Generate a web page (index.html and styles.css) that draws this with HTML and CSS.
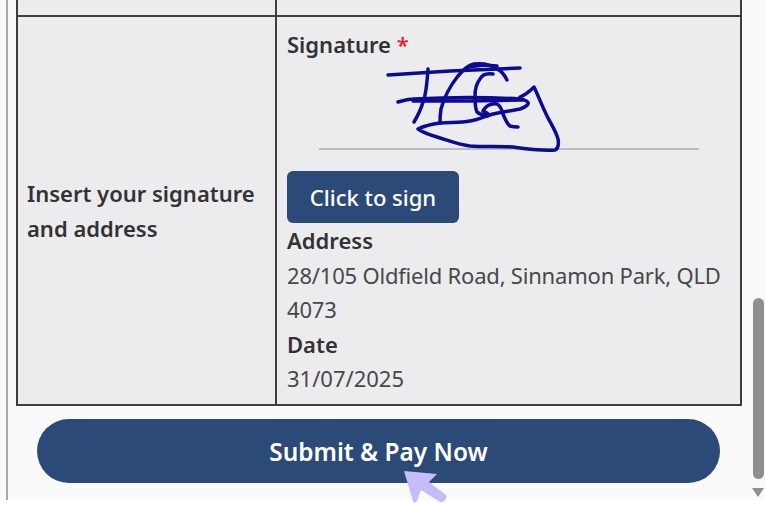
FILE: index.html
```html
<!DOCTYPE html>
<html lang="en">
<head>
<meta charset="utf-8">
<title>Signature</title>
<link rel="stylesheet" href="styles.css">
</head>
<body>
<div class="page">
  <main class="content">
    <table class="form-table">
      <tr class="row-prev"><td class="label"></td><td class="field"></td></tr>
      <tr>
        <td class="label"><strong>Insert your signature and address</strong></td>
        <td class="field">
          <div class="line title"><strong>Signature</strong> <span class="req">*</span></div>
          <div class="sig-pad">
            <svg class="sig" viewBox="319 60 380 95" fill="none" stroke="#0b0b96" stroke-width="3.5" stroke-linecap="round" stroke-linejoin="round" aria-hidden="true">
              <path d="M388 76L450 72L520 69"/>
              <path d="M468 68L484 66L497 67"/>
              <path d="M428 70C427 85 426 96 423 103C421 110 417 118 414 123"/>
              <path d="M507 81C504 75 500 71 497 70C490 65 482 64 474 65C468 66 464 70 458 77C450 87 444 99 441 110C440 116 440 120 440 124"/>
              <path d="M398 103C405 101 409 100 413 100C450 98 490 98 520 100C526 101 529 103 528 105C526 108 523 109 520 110C510 112 502 113 493 115C485 117 478 121 470 122C460 124 450 123 440 124C432 125 424 127 418 130C424 134 430 136 437 138C450 142 460 146 470 147C485 148 500 147 513 148C527 150 541 152 555 151C558 150 559 145 558 140C556 132 551 125 547 117C542 107 538 96 534 88C530 92 525 96 520 98"/>
              <path d="M413 102L470 102L522 101"/>
              <path d="M493 75C487 74 482 76 480 80C476 85 475 90 475 97C475 103 475 109 477 113C480 116 484 116 487 117C491 116 487 114 483 112C486 107 491 104 497 105C501 107 502 111 503 115C505 120 507 125 510 127C513 128 516 128 518 128"/>
            </svg>
          </div>
          <button class="btn-sign" type="button">Click to sign</button>
          <div class="line"><strong>Address</strong></div>
          <div class="line addr">28/105 Oldfield Road, Sinnamon Park, QLD 4073</div>
          <div class="line"><strong>Date</strong></div>
          <div class="line">31/07/2025</div>
        </td>
      </tr>
    </table>
    <button class="btn-submit" type="button">Submit &amp; Pay Now</button>
    <svg class="cursor" viewBox="0 0 50 36" aria-hidden="true"><path d="M3 2L36 5L28 13L45 26C47 29 43 34 39 33L20 21L16 32C15 34 13 34 12 32Z" fill="#c5bcfb"/></svg>
  </main>
  <aside class="scrollbar">
    <div class="thumb"></div>
    <div class="arrow"></div>
  </aside>
</div>
<div class="below"></div>
</body>
</html>
```
FILE: styles.css
```css
html, body { margin: 0; padding: 0; background: #fff; }
body { height: 530px; overflow: hidden; font-family: "Noto Sans", "Open Sans", sans-serif; color: #484848; }
.page { display: flex; height: 500px; background: #fafafa; padding-left: 6px; position: relative; }
.content { flex: 1; border-left: 2px solid #a9a9a9; padding-left: 8px; min-width: 0; }
.form-table { width: 726px; border-collapse: collapse; table-layout: fixed; background: #ececee; font-size: 22px; line-height: 34.4px; }
.form-table td { border: 2px solid #3d3d3d; padding: 0 10px 9px 10px; box-sizing: border-box; }
.form-table td.label { width: 259px; padding-left: 9px; padding-bottom: 0; }
.row-prev td { height: 16px; padding: 0 !important; border-top: 0 !important; }
.label strong { display: block; line-height: 35px; }
strong { font-weight: 600; color: #333; }
.field { vertical-align: top; }
.title { margin-top: 10px; }
.addr { letter-spacing: -0.2px; }
.req { color: #e3262e; font-weight: 600; }
.sig-pad { height: 112px; margin: 0 31px 0 32px; position: relative; }
.sig { display: block; width: 380px; height: 95px; margin-top: -2px; overflow: visible; background: linear-gradient(#bdbdbd, #bdbdbd) 0 89px / 100% 2px no-repeat; }
.btn-sign { display: block; width: 172px; height: 52px; border: 0; border-radius: 6px; background: #2b4a78; color: #fff; font: 500 22px "Noto Sans", sans-serif; padding: 0; }
.btn-submit { display: block; width: 683px; height: 64px; margin: 13px 0 0 21px; border: 0; border-radius: 32px; background: #2b4a78; color: #fff; font: 600 24.4px "Noto Sans", sans-serif; padding: 0; }
.cursor { position: absolute; left: 401px; top: 469px; width: 50px; height: 36px; }
.scrollbar { width: 12px; margin-right: 1px; display: flex; flex-direction: column; align-items: center; }
.thumb { width: 11px; height: 181px; margin-top: 298px; border-radius: 6px; background: #8f8f8f; }
.arrow { width: 0; height: 0; margin-top: 9px; border-left: 6px solid transparent; border-right: 6px solid transparent; border-top: 9px solid #8f8f8f; }
.below { height: 30px; background: #fff; }
```
